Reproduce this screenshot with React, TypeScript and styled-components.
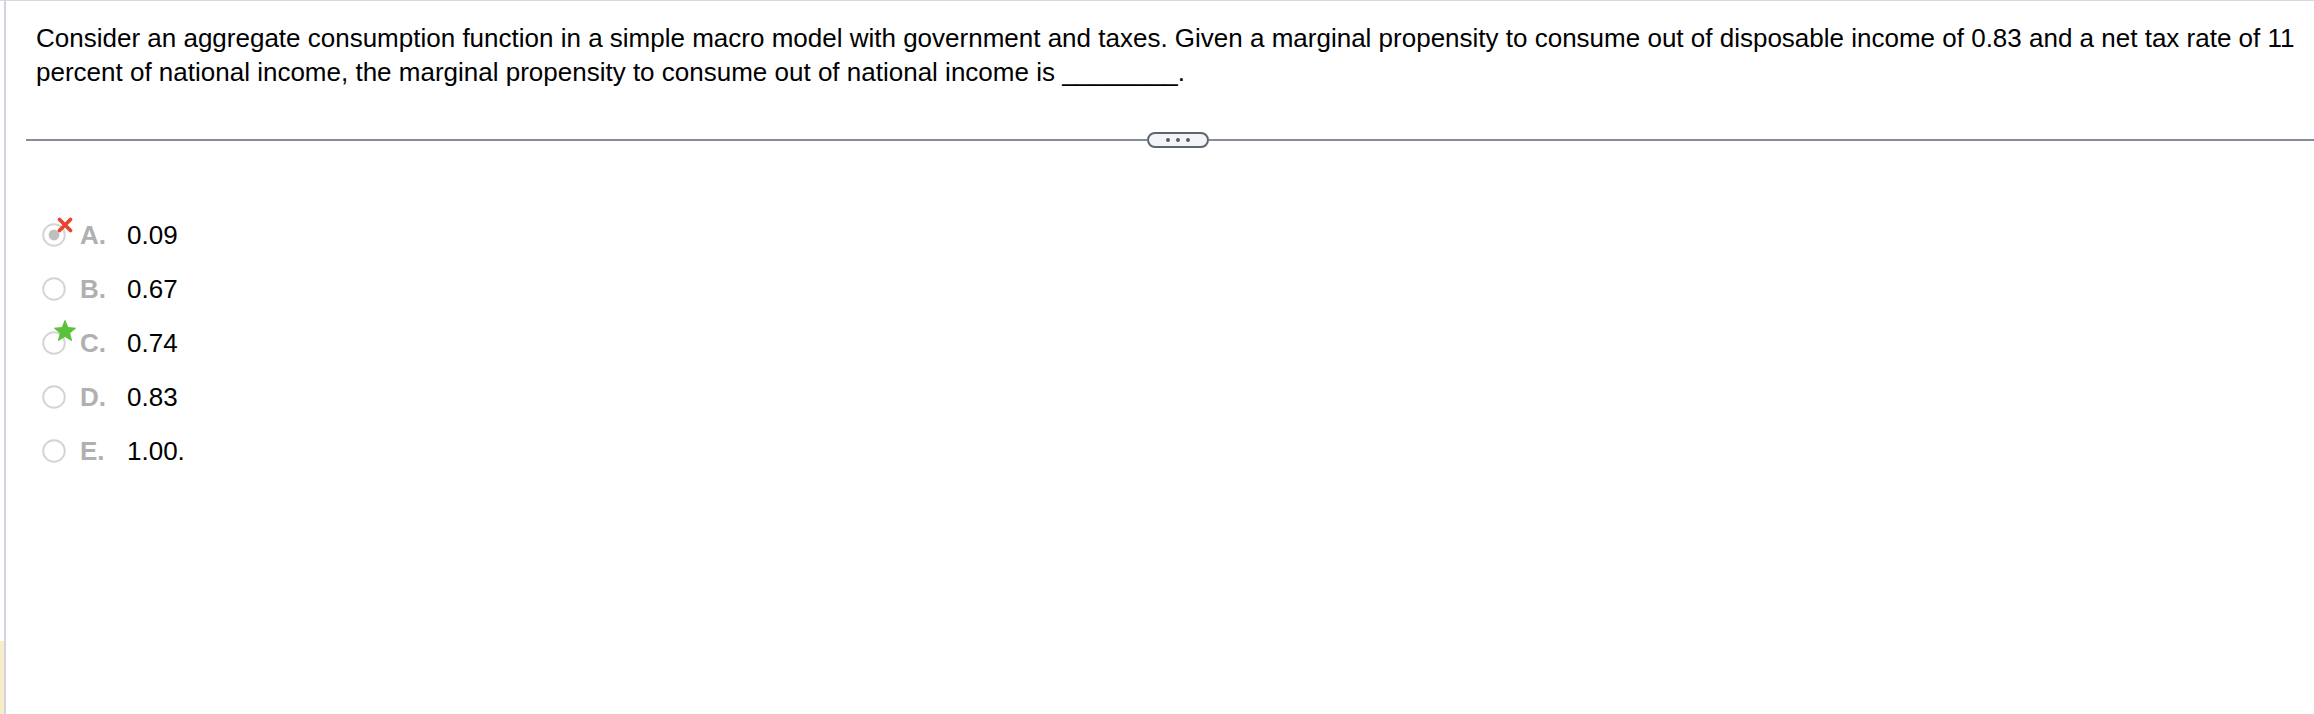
import { createGlobalStyle, styled } from 'styled-components'

const options = [
  { letter: 'A.', value: '0.09', selected: true, mark: 'wrong' as const },
  { letter: 'B.', value: '0.67' },
  { letter: 'C.', value: '0.74', mark: 'correct' as const },
  { letter: 'D.', value: '0.83' },
  { letter: 'E.', value: '1.00.' },
]

type Option = (typeof options)[number] & {
  selected?: boolean
  mark?: 'wrong' | 'correct'
}

export default function App() {
  return (
    <>
      <GlobalStyle />
      <Frame>
        <Rail>
          <RailNote />
        </Rail>
        <Main>
          <Question>
            Consider an aggregate consumption function in a simple macro model
            with government and taxes. Given a marginal propensity to consume
            out of disposable income of 0.83 and a net tax rate of 11 percent
            of national income, the marginal propensity to consume out of
            national income is ________.
          </Question>
          <Separator>
            <SeparatorLine />
            <MoreButton type="button" aria-label="More">
              <Dot />
              <Dot />
              <Dot />
            </MoreButton>
            <SeparatorLine />
          </Separator>
          <OptionList>
            {(options as Option[]).map((option) => (
              <OptionRow key={option.letter}>
                <Marker>
                  <Radio $selected={!!option.selected} />
                  {option.mark === 'wrong' && <WrongMark />}
                  {option.mark === 'correct' && <CorrectMark />}
                </Marker>
                <Letter>{option.letter}</Letter>
                <Value>{option.value}</Value>
              </OptionRow>
            ))}
          </OptionList>
        </Main>
      </Frame>
    </>
  )
}

function Radio({ $selected }: { $selected: boolean }) {
  return (
    <RadioSvg viewBox="0 0 24 24" width="24" height="24">
      <circle cx="12" cy="12" r="10.8" fill="#fff" stroke="#d4d4d4" strokeWidth="1.9" />
      {$selected && <circle cx="12" cy="12" r="5.4" fill="#bfbfbf" />}
    </RadioSvg>
  )
}

function WrongMark() {
  return (
    <Badge $top={-7} $left={14} viewBox="0 0 18 18" width="18" height="18">
      <path
        d="M3.5 3.5 L14.5 14.5 M14.5 3.5 L3.5 14.5"
        stroke="#e8432d"
        strokeWidth="3.8"
        strokeLinecap="round"
      />
    </Badge>
  )
}

function CorrectMark() {
  return (
    <Badge $top={-12} $left={11} viewBox="0 0 24 24" width="24" height="24">
      <path
        d="M12 1.5 L14.9 8.6 L22.6 9.2 L16.7 14.1 L18.6 21.6 L12 17.5 L5.4 21.6 L7.3 14.1 L1.4 9.2 L9.1 8.6 Z"
        fill="#5ac23a"
        stroke="#5ac23a"
        strokeWidth="1"
        strokeLinejoin="round"
      />
    </Badge>
  )
}

const GlobalStyle = createGlobalStyle`
  html, body {
    margin: 0;
    padding: 0;
    background: #fff;
  }

  body {
    font-family: 'Liberation Sans', Arial, sans-serif;
    color: #000;
  }
`

const Frame = styled.div`
  display: flex;
  height: 714px;
  box-sizing: border-box;
  border-top: 1px solid #d5d9e1;
  overflow: hidden;
`

const Rail = styled.div`
  display: flex;
  flex-direction: column;
  justify-content: flex-end;
  width: 4px;
  flex-shrink: 0;
`

const RailNote = styled.div`
  height: 73px;
  background: #f7edc8;
`

const Main = styled.div`
  flex: 1;
  min-width: 0;
  border-left: 2px solid #d2d2e2;
`

const Question = styled.p`
  margin: 0;
  padding: 20px 8px 0 30px;
  font-size: 26px;
  line-height: 34px;
`

const Separator = styled.div`
  display: grid;
  grid-template-columns: calc(50% - 23px) 62px 1fr;
  align-items: center;
  margin: 43px 0 0 20px;
`

const SeparatorLine = styled.div`
  height: 2px;
  background: #858c98;
`

const MoreButton = styled.button`
  display: flex;
  align-items: center;
  justify-content: center;
  gap: 6px;
  height: 16px;
  padding: 0;
  box-sizing: border-box;
  background: #f3f4f6;
  border: 2px solid #5b6574;
  border-radius: 8px;
`

const Dot = styled.span`
  width: 4px;
  height: 4px;
  border-radius: 50%;
  background: #545c67;
`

const OptionList = styled.div`
  display: flex;
  flex-direction: column;
  margin-top: 60px;
  padding-left: 36px;
`

const OptionRow = styled.div`
  display: grid;
  grid-template-columns: 24px 33px auto;
  column-gap: 14px;
  align-items: center;
  height: 54px;
  font-size: 26px;
  line-height: 54px;
`

const Marker = styled.div`
  position: relative;
  width: 24px;
  height: 24px;
`

const RadioSvg = styled.svg`
  display: block;
`

const Badge = styled.svg<{ $top: number; $left: number }>`
  position: absolute;
  top: ${({ $top }) => $top}px;
  left: ${({ $left }) => $left}px;
`

const Letter = styled.span`
  color: #b0b0b0;
  font-weight: 700;
`

const Value = styled.span`
  color: #000;
`
